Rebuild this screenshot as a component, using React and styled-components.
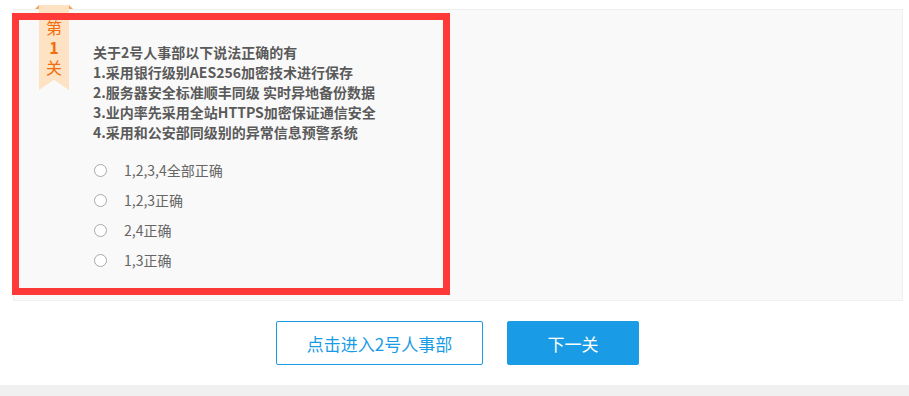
import React from "react";
import styled, { createGlobalStyle } from "styled-components";

const Global = createGlobalStyle`
  html, body { margin: 0; padding: 0; background: #fff; }
  body { font-family: "Noto Sans CJK SC", "Noto Sans", sans-serif; }
  * { box-sizing: border-box; }
`;

const Page = styled.div`
  position: relative;
  width: 909px;
  height: 396px;
  overflow: hidden;
  display: flex;
  flex-direction: column;
`;

const Main = styled.div`
  padding: 9px 6px 0 13px;
`;

const Card = styled.div`
  position: relative;
  height: 292px;
  border: 1px solid #efefef;
  background: #f9f9f9;
  padding: 32px 0 0 79px;
`;

const Ribbon = styled.div`
  position: absolute;
  left: 25px;
  top: -5px;
  width: 30px;
  height: 85px;
  padding-top: 12px;
  background: #fde3c4;
  clip-path: polygon(0 0, 100% 0, 100% 100%, 50% 88%, 0 100%);
  display: flex;
  flex-direction: column;
  align-items: center;
  color: #f26d0c;
  font-size: 16px;
  line-height: 20px;
`;

const Fold = styled.div`
  position: absolute;
  top: -5px;
  left: ${(p) => (p.$side === "left" ? "21px" : "55px")};
  width: 4px;
  height: 4px;
  background: #f3a455;
  clip-path: ${(p) =>
    p.$side === "left"
      ? "polygon(100% 0, 100% 100%, 0 100%)"
      : "polygon(0 0, 100% 100%, 0 100%)"};
`;

const RibbonChar = styled.span`
  display: block;
  height: 20px;
  font-weight: ${(p) => (p.$bold ? 700 : 400)};
`;

const Question = styled.div`
  font-size: 14px;
  line-height: 20px;
  font-weight: 700;
  color: #5a5a5a;
`;

const Options = styled.div`
  margin-top: 13px;
  display: flex;
  flex-direction: column;
`;

const Option = styled.label`
  height: 30px;
  display: flex;
  align-items: center;
  font-size: 14px;
  color: #666;
`;

const Radio = styled.span`
  width: 13px;
  height: 13px;
  margin-left: 1px;
  margin-right: 17px;
  border-radius: 50%;
  border: 1px solid #a9a9a9;
  background: #fff;
  flex-shrink: 0;
`;

const Highlight = styled.div`
  position: absolute;
  left: 12px;
  top: 13px;
  width: 438px;
  height: 282px;
  border: 7px solid #ff3838;
  pointer-events: none;
`;

const Actions = styled.div`
  width: 889px;
  margin-top: 20px;
  display: flex;
  justify-content: center;
  gap: 24px;
`;

const Button = styled.button`
  height: 44px;
  width: ${(p) => p.$w}px;
  border-radius: 2px;
  border: 1px solid #1a9be6;
  background: ${(p) => (p.$primary ? "#1a9be6" : "#fff")};
  color: ${(p) => (p.$primary ? "#fff" : "#1a9be6")};
  font-family: "Noto Sans CJK SC", sans-serif;
  font-size: 17px;
  font-weight: 400;
  padding: 0;
  cursor: pointer;
`;

const Footer = styled.div`
  margin-top: 20px;
  height: 20px;
  background: #f0f0f0;
`;

const lines = [
  "关于2号人事部以下说法正确的有",
  "1.采用银行级别AES256加密技术进行保存",
  "2.服务器安全标准顺丰同级 实时异地备份数据",
  "3.业内率先采用全站HTTPS加密保证通信安全",
  "4.采用和公安部同级别的异常信息预警系统",
];

const options = ["1,2,3,4全部正确", "1,2,3正确", "2,4正确", "1,3正确"];

export default function App() {
  return (
    <Page>
      <Global />
      <Main>
        <Card>
          <Fold $side="left" />
          <Fold $side="right" />
          <Ribbon>
            <RibbonChar>第</RibbonChar>
            <RibbonChar $bold>1</RibbonChar>
            <RibbonChar>关</RibbonChar>
          </Ribbon>
          <Question>
            {lines.map((l) => (
              <div key={l}>{l}</div>
            ))}
          </Question>
          <Options>
            {options.map((o) => (
              <Option key={o}>
                <Radio />
                {o}
              </Option>
            ))}
          </Options>
        </Card>
        <Actions>
          <Button $w={207}>点击进入2号人事部</Button>
          <Button $w={132} $primary>
            下一关
          </Button>
        </Actions>
      </Main>
      <Footer />
      <Highlight />
    </Page>
  );
}
